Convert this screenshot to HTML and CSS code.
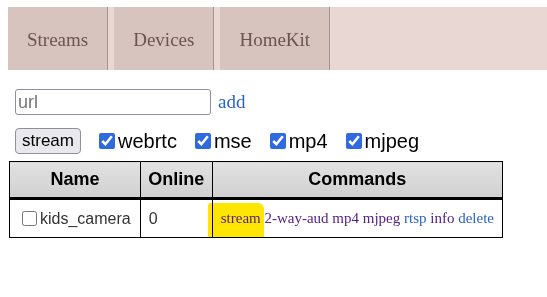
FILE: index.html
```html
<!DOCTYPE html>
<html lang="en">
<head>
    <meta charset="UTF-8">
    <meta name="viewport" content="width=device-width, initial-scale=1.0">
    <title>go2rtc</title>
    <link rel="stylesheet" href="styles.css">
</head>
<body>

<!-- Top navigation -->
<nav class="tabs">
    <a class="tab" href="#">Streams</a>
    <a class="tab" href="#">Devices</a>
    <a class="tab" href="#">HomeKit</a>
</nav>

<div class="main">
    <div class="add-row">
        <input type="text" class="url-field" placeholder="url">
        <a class="add-link" href="#">add</a>
    </div>

    <div class="mode-row">
        <button type="button" class="stream-btn">stream</button>
        <label class="mode"><input type="checkbox" checked>webrtc</label>
        <label class="mode"><input type="checkbox" checked>mse</label>
        <label class="mode"><input type="checkbox" checked>mp4</label>
        <label class="mode"><input type="checkbox" checked>mjpeg</label>
    </div>
</div>

<table class="streams">
    <thead>
        <tr>
            <th class="col-name">Name</th>
            <th class="col-online">Online</th>
            <th class="col-commands">Commands</th>
        </tr>
    </thead>
    <tbody>
        <tr>
            <td><label class="stream-name"><input type="checkbox">kids_camera</label></td>
            <td>0</td>
            <td class="commands">
                <span class="marker"></span>
                <a class="visited" href="#">stream</a>
                <a class="visited" href="#">2-way-aud</a>
                <a class="visited" href="#">mp4</a>
                <a class="visited" href="#">mjpeg</a>
                <a href="#">rtsp</a>
                <a class="visited" href="#">info</a>
                <a href="#">delete</a>
            </td>
        </tr>
    </tbody>
</table>

</body>
</html>
```

FILE: styles.css
```css
body {
    margin: 0;
    padding: 7px 0 0 8px;
    font-family: "Liberation Sans", Arial, sans-serif;
    background-color: white;
}

.tabs {
    display: flex;
    height: 63px;
    background-color: #e8d7d3;
}

.tab {
    display: block;
    padding: 3px 19px 0;
    line-height: 60px;
    margin-right: 6px;
    background-color: #d7c4be;
    border-right: 1px solid #a8928c;
    color: #6b5550;
    font-family: "Liberation Serif", "Times New Roman", serif;
    font-size: 19px;
    text-decoration: none;
}

.main {
    padding-left: 7px;
}

.add-row {
    display: flex;
    align-items: center;
    margin-top: 19px;
}

.url-field {
    width: 196px;
    height: 26px;
    box-sizing: border-box;
    padding: 0 2px;
    border: 1px solid #8f8f9d;
    border-radius: 3px;
    font-family: "Liberation Sans", Arial, sans-serif;
    font-size: 18px;
}

.url-field::placeholder {
    color: #757575;
}

.add-link {
    margin-left: 7px;
    color: #2a62c9;
    font-family: "Liberation Serif", "Times New Roman", serif;
    font-size: 19px;
    text-decoration: none;
}

.mode-row {
    display: flex;
    align-items: center;
    margin-top: 13px;
    font-size: 20px;
}

.stream-btn {
    width: 66px;
    height: 26px;
    padding: 0;
    border: 1px solid #8f8f9d;
    border-radius: 4px;
    background-color: #e9e9ed;
    font-family: "Liberation Sans", Arial, sans-serif;
    font-size: 17px;
    color: black;
}

.mode {
    display: flex;
    align-items: center;
    margin-left: 18px;
}

.mode input {
    width: 16px;
    height: 16px;
    margin: 0 3px 0 0;
    accent-color: #2f6ae0;
}

table.streams {
    width: 494px;
    margin: 7px 0 0 1px;
    border-collapse: collapse;
    border: 1px solid black;
    font-size: 18px;
}

th {
    height: 35px;
    padding: 0;
    border: 1px solid black;
    border-bottom: 3px solid black;
    background: linear-gradient(#e2e2e2, #d0d0d0);
    font-weight: bold;
}

.col-name {
    width: 130px;
}

.col-online {
    width: 73px;
}

td {
    height: 37px;
    padding: 0 8px;
    border: 1px solid black;
    color: #333;
    font-size: 16px;
}

.stream-name {
    display: flex;
    align-items: center;
}

.stream-name input {
    width: 15px;
    height: 15px;
    margin: 0 3px 0 4px;
}

.commands {
    position: relative;
    font-family: "Liberation Serif", "Times New Roman", serif;
    font-size: 15px;
    white-space: nowrap;
}

.commands a {
    position: relative;
    color: #2a62c9;
    text-decoration: none;
}

.commands a.visited {
    color: #55208b;
}

/* yellow highlighter mark over the first command */
.marker {
    position: absolute;
    left: -5px;
    top: 3px;
    width: 56px;
    height: 41px;
    background-color: #ffe600;
    border-radius: 3px 6px 8px 4px;
    mix-blend-mode: multiply;
}
```
